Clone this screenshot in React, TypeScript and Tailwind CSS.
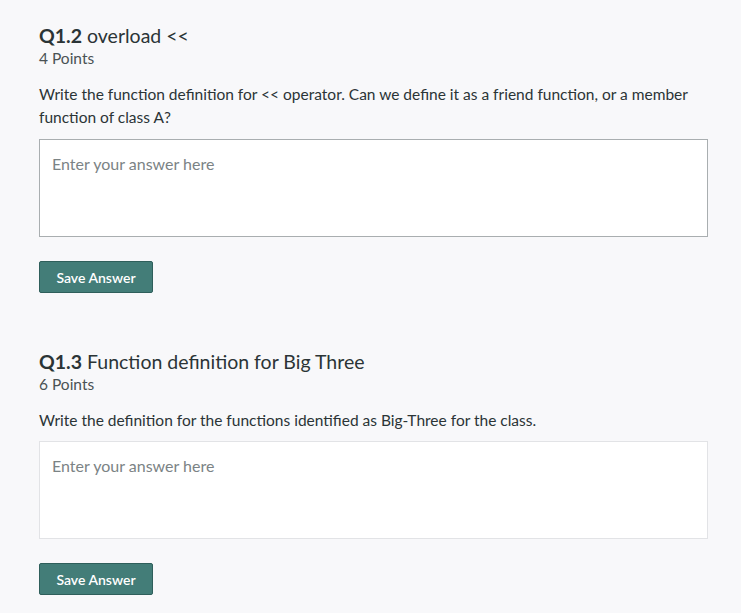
import React from "react";

type Question = {
  num: string;
  title: string;
  points: string;
  prompt: string;
  active?: boolean;
};

const questions: Question[] = [
  {
    num: "Q1.2",
    title: "overload <<",
    points: "4 Points",
    prompt:
      "Write the function definition for << operator. Can we define it as a friend function, or a member function of class A?",
    active: true,
  },
  {
    num: "Q1.3",
    title: "Function definition for Big Three",
    points: "6 Points",
    prompt:
      "Write the definition for the functions identified as Big-Three for the class.",
  },
];

function QuestionBlock({ q }: { q: Question }) {
  return (
    <section className="flex flex-col">
      <h2 className="text-[19.5px] leading-[26px] text-[#2b3436]">
        <span className="font-bold">{q.num}</span> {q.title}
      </h2>
      <p className="text-[15.5px] leading-[18px] text-[#4a5254]">{q.points}</p>
      <p className="mt-[16px] text-[15.5px] leading-[23px] text-[#2b3436] pr-[40px]">
        {q.prompt}
      </p>
      <textarea
        className={
          q.active
            ? "mt-[10px] h-[98px] w-[669px] resize-none bg-white border border-[#a9aeb0] px-[12px] py-[12px] text-[16px] text-[#2b3436] placeholder:text-[#7b8385] outline-none"
            : "mt-[9px] h-[98px] w-[669px] resize-none bg-white border border-[#e2e3e6] px-[12px] py-[12px] text-[16px] text-[#2b3436] placeholder:text-[#7b8385] outline-none"
        }
        placeholder="Enter your answer here"
      />
      <div className="mt-[24px]">
        <button className="h-[32px] w-[114px] rounded-[2px] bg-[#437d78] border border-[#2f5f5b] text-white text-[14px] font-semibold">
          Save Answer
        </button>
      </div>
    </section>
  );
}

export default function App() {
  return (
    <div
      className="min-h-[613px] bg-[#f8f8fa] pl-[39px] pt-[23px] flex flex-col gap-[56px]"
      style={{ fontFamily: "Lato, 'Noto Sans', sans-serif" }}
    >
      {questions.map((q) => (
        <QuestionBlock key={q.num} q={q} />
      ))}
    </div>
  );
}
